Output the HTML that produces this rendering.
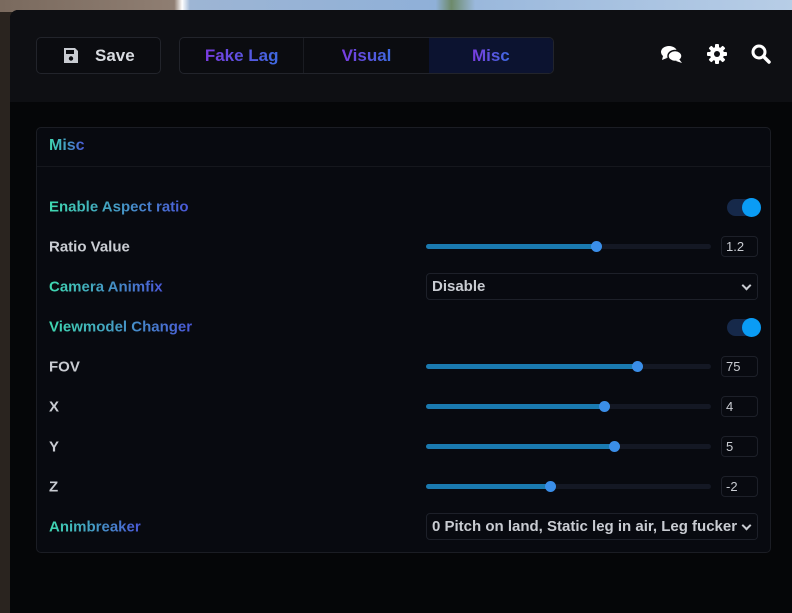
<!DOCTYPE html>
<html><head><style>
*{margin:0;padding:0;box-sizing:border-box}
body{width:792px;height:613px;overflow:hidden;background:#2a241f;font-family:"Liberation Sans",sans-serif;position:relative}
.top{position:absolute;left:0;top:0;width:792px;height:12px;background:linear-gradient(90deg,#7a6a5e 0,#8f7e72 22%,#fff 23%,#9db5d4 24%,#8fb0d8 55%,#6d8a6a 57%,#9ab8dc 60%,#b7cde6 100%)}
.win{position:absolute;left:10px;top:10px;width:782px;height:603px;background:#050608;border-radius:8px 0 0 0;overflow:hidden}
.hdr{position:absolute;left:0;top:0;width:782px;height:92px;background:#0e0f13}
.btn{position:absolute;top:27px;height:37px;border:1px solid #22242b;border-radius:5px;background:#0b0c10}
.save{left:26px;width:125px;color:#d8dbe0;font-size:17px;font-weight:bold;line-height:35px;padding-left:58px}
.tabs{left:169px;width:375px;display:flex;overflow:hidden}
.tab{width:125px;text-align:center;line-height:35px;font-size:17px;font-weight:bold}
.grad{background:linear-gradient(90deg,#7a3ce0,#3d6ae0);-webkit-background-clip:text;background-clip:text;color:transparent}
.row{position:absolute;left:12px;font-size:15px;font-weight:bold;color:#c9ccd2;transform:translateY(-50%)}
.card{position:absolute;left:26px;top:117px;width:735px;height:426px;border:1px solid #1b1d24;border-radius:5px;background:#080a10}
.title{position:absolute;left:12px;top:9px;font-size:16px;font-weight:bold;display:inline-block}
.tg,.row.tg{background:linear-gradient(90deg,#3fd9b0,#4a58d8);-webkit-background-clip:text;background-clip:text;color:transparent}
.div{position:absolute;left:0;right:0;top:38px;height:1px;background:#15171d}
.track{position:absolute;left:389px;width:285px;height:5px;border-radius:3px;background:#141824}
.fill{position:absolute;left:0;top:0;height:5px;border-radius:3px;background:#1a7ab0}
.knob{position:absolute;top:-3px;width:11px;height:11px;border-radius:50%;background:#3a8ee8;margin-left:-5px}
.val{position:absolute;left:684px;width:37px;height:21px;border:1px solid #1d2029;border-radius:4px;color:#c9ccd2;font-size:13px;line-height:19px;padding-left:4px}
.sel{position:absolute;left:389px;width:332px;height:27px;border:1px solid #1d2029;border-radius:4px;color:#c9ccd2;font-size:15px;font-weight:bold;line-height:25px;padding-left:5px;white-space:nowrap;overflow:hidden}
.sel:after{content:"";position:absolute;right:0;top:0;width:18px;height:25px;background:#080a10}
.sel:before{content:"";position:absolute;right:7px;top:8px;width:5px;height:5px;border-right:2px solid #c9ccd2;border-bottom:2px solid #c9ccd2;transform:rotate(45deg);z-index:2}
.tog{position:absolute;left:690px;width:33px;height:17px;border-radius:9px;background:#16294a}
.tog i{position:absolute;right:-1px;top:-1px;width:19px;height:19px;border-radius:50%;background:#0a9cf5}
</style></head><body>
<div class="top"></div>
<div class="win">
 <div class="hdr">
  <div class="btn save">Save
   <svg style="position:absolute;left:26px;top:9px" width="16" height="17" viewBox="0 0 16 17"><path d="M1 1h11l3 3v12H1z" fill="#c9ccd2"/><rect x="3" y="3" width="8" height="4" fill="#0b0c10"/><circle cx="8" cy="11.5" r="2.2" fill="#0b0c10"/></svg>
  </div>
  <div class="btn tabs">
   <div class="tab" style="border-right:1px solid #1a1c22"><span class="grad">Fake Lag</span></div>
   <div class="tab"><span class="grad">Visual</span></div>
   <div class="tab" style="background:#0c1330"><span class="grad">Misc</span></div>
  </div>
  <svg style="position:absolute;left:651px;top:35px" width="22" height="19" viewBox="0 0 22 19"><ellipse cx="8" cy="7" rx="8" ry="6" fill="#fff"/><path d="M2 11l-1 4 5-2z" fill="#fff"/><ellipse cx="14" cy="11" rx="7" ry="5.5" fill="#fff" stroke="#0e0f13" stroke-width="1.5"/><path d="M18 14l3 4-6-2z" fill="#fff"/></svg>
  <svg style="position:absolute;left:697px;top:34px" width="20" height="20" viewBox="0 0 20 20"><g fill="#fff"><circle cx="10" cy="10" r="7"/><rect x="8" y="0" width="4" height="20" rx="1"/><rect x="8" y="0" width="4" height="20" rx="1" transform="rotate(45 10 10)"/><rect x="8" y="0" width="4" height="20" rx="1" transform="rotate(90 10 10)"/><rect x="8" y="0" width="4" height="20" rx="1" transform="rotate(135 10 10)"/></g><circle cx="10" cy="10" r="3" fill="#0e0f13"/></svg>
  <svg style="position:absolute;left:741px;top:34px" width="20" height="20" viewBox="0 0 20 20"><circle cx="8" cy="8" r="6" fill="none" stroke="#fff" stroke-width="3"/><path d="M12.5 12.5L18 18" stroke="#fff" stroke-width="3.5" stroke-linecap="round"/></svg>
 </div>
 <div class="card">
  <div class="title tg">Misc</div>
  <div class="div"></div>
  <div class="row tg" style="top:79px">Enable Aspect ratio</div>
  <div class="tog" style="top:71px"><i></i></div>
  <div class="row" style="top:119px">Ratio Value</div>
  <div class="track" style="top:116px"><div class="fill" style="width:170px"></div><div class="knob" style="left:170px"></div></div>
  <div class="val" style="top:108px">1.2</div>
  <div class="row tg" style="top:159px">Camera Animfix</div>
  <div class="sel" style="top:145px">Disable</div>
  <div class="row tg" style="top:199px">Viewmodel Changer</div>
  <div class="tog" style="top:191px"><i></i></div>
  <div class="row" style="top:239px">FOV</div>
  <div class="track" style="top:236px"><div class="fill" style="width:211px"></div><div class="knob" style="left:211px"></div></div>
  <div class="val" style="top:228px">75</div>
  <div class="row" style="top:279px">X</div>
  <div class="track" style="top:276px"><div class="fill" style="width:178px"></div><div class="knob" style="left:178px"></div></div>
  <div class="val" style="top:268px">4</div>
  <div class="row" style="top:319px">Y</div>
  <div class="track" style="top:316px"><div class="fill" style="width:188px"></div><div class="knob" style="left:188px"></div></div>
  <div class="val" style="top:308px">5</div>
  <div class="row" style="top:359px">Z</div>
  <div class="track" style="top:356px"><div class="fill" style="width:124px"></div><div class="knob" style="left:124px"></div></div>
  <div class="val" style="top:348px">-2</div>
  <div class="row tg" style="top:399px">Animbreaker</div>
  <div class="sel" style="top:385px">0 Pitch on land, Static leg in air, Leg fucker</div>
 </div>
</div>
</body></html>
